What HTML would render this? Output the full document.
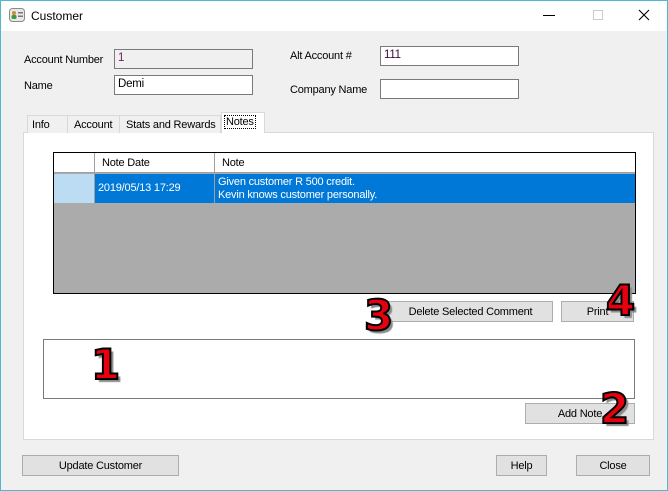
<!DOCTYPE html>
<html><head><style>
*{margin:0;padding:0;box-sizing:border-box}
body{width:668px;height:491px;overflow:hidden;font-family:"Liberation Sans",sans-serif;font-size:11px;letter-spacing:-0.2px;color:#000;background:#f0f0f0;position:relative;white-space:nowrap}
.a{position:absolute}
.win{left:0;top:0;width:668px;height:491px;border:1px solid #4fb8cf}
.title{left:1px;top:1px;width:666px;height:30px;background:#fff}
.inp{position:absolute;background:#fff;border:1px solid #7a7a7a;height:20px;padding:0 3px;line-height:17px;font-size:11.5px}
.btn{position:absolute;background:#e1e1e1;border:1px solid #adadad;height:21px;text-align:center;line-height:20px;font-size:11px}
.tab{position:absolute;top:115px;height:18px;border:1px solid #d9d9d9;border-bottom:none;background:#f0f0f0;line-height:18px;padding-left:4px}
.num{position:absolute;font-weight:bold;font-size:42px;color:#e8000e;-webkit-text-stroke:2px #000;text-shadow:3px 3px 1px #8a8a8a;font-family:"DejaVu Sans",sans-serif;line-height:1;letter-spacing:0}
</style></head><body>
<div class="a win"></div>
<div class="a title"></div>
<svg class="a" style="left:9px;top:8px" width="16" height="14" viewBox="0 0 16 14"><rect x="0.5" y="0.5" width="15" height="13" rx="3" fill="#e8e8e8" stroke="#8a8a8a"/><circle cx="5" cy="5" r="2" fill="#d08a3a"/><rect x="2.5" y="7" width="5" height="4" rx="1.5" fill="#3a9a3a"/><rect x="9" y="4" width="5" height="1.5" fill="#777"/><rect x="9" y="7.5" width="5" height="1.5" fill="#777"/></svg>
<div class="a" style="left:31px;top:9px;font-size:12px;letter-spacing:0">Customer</div>
<div class="a" style="left:543px;top:15px;width:12px;height:1px;background:#000"></div>
<div class="a" style="left:593px;top:10px;width:10px;height:10px;border:1px solid #ccc"></div>
<svg class="a" style="left:638px;top:9px" width="12" height="12"><path d="M1 1L11 11M11 1L1 11" stroke="#000" stroke-width="1.1"/></svg>

<div class="a" style="left:24px;top:54px">Account Number</div>
<div class="inp" style="left:114px;top:49px;width:139px;background:#f0f0f0;color:#6d1f5e">1</div>
<div class="a" style="left:24px;top:80px">Name</div>
<div class="inp" style="left:114px;top:75px;width:139px">Demi</div>
<div class="a" style="left:290px;top:50px">Alt Account #</div>
<div class="inp" style="left:380px;top:46px;width:139px;color:#3a0a40">111</div>
<div class="a" style="left:290px;top:84px">Company Name</div>
<div class="inp" style="left:380px;top:79px;width:139px"></div>

<div class="a" style="left:23px;top:132px;width:631px;height:308px;background:#fff;border:1px solid #d9d9d9"></div>
<div class="tab" style="left:27px;width:41px">Info</div>
<div class="tab" style="left:67px;width:53px;padding-left:6px">Account</div>
<div class="tab" style="left:119px;width:102px;padding-left:6px">Stats and Rewards</div>
<div class="tab" style="left:221px;top:112px;height:21px;width:44px;background:#fff;padding-left:2px;padding-top:1px;line-height:16px"><span style="border:1px dotted #000;padding:0 1px">Notes</span></div>

<div class="a" style="left:53px;top:152px;width:583px;height:142px;background:#ababab;border:1px solid #000"></div>
<div class="a" style="left:54px;top:153px;width:581px;height:20px;background:#fff;border-bottom:1px solid #a0a0a0"></div>
<div class="a" style="left:94px;top:153px;width:1px;height:50px;background:#a0a0a0"></div>
<div class="a" style="left:214px;top:153px;width:1px;height:50px;background:#a0a0a0"></div>
<div class="a" style="left:102px;top:157px">Note Date</div>
<div class="a" style="left:222px;top:157px">Note</div>
<div class="a" style="left:54px;top:174px;width:40px;height:29px;background:#bcdcf4"></div>
<div class="a" style="left:95px;top:174px;width:119px;height:29px;background:#0078d7"></div>
<div class="a" style="left:215px;top:174px;width:420px;height:29px;background:#0078d7"></div>
<div class="a" style="left:98px;top:182px;color:#fff">2019/05/13 17:29</div>
<div class="a" style="left:218px;top:176px;color:#fff;line-height:13px">Given customer R 500 credit.<br>Kevin knows customer personally.</div>

<div class="btn" style="left:388px;top:301px;width:165px">Delete Selected Comment</div>
<div class="btn" style="left:561px;top:301px;width:73px">Print</div>
<div class="a" style="left:43px;top:339px;width:592px;height:60px;border:1px solid #7a7a7a;background:#fff"></div>
<div class="btn" style="left:525px;top:403px;width:110px">Add Note</div>

<div class="btn" style="left:22px;top:455px;width:157px">Update Customer</div>
<div class="btn" style="left:496px;top:455px;width:51px">Help</div>
<div class="btn" style="left:576px;top:455px;width:74px">Close</div>

<div class="num" style="left:91px;top:344px">1</div>
<div class="num" style="left:600px;top:388px">2</div>
<div class="num" style="left:364px;top:295px">3</div>
<div class="num" style="left:606px;top:280px">4</div>
</body></html>
